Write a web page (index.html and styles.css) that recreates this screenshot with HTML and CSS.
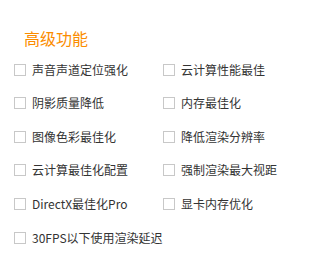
FILE: index.html
```html
<!DOCTYPE html>
<html lang="zh">
<head>
<meta charset="utf-8">
<link rel="stylesheet" href="styles.css">
</head>
<body>
<div class="panel">
  <h2 class="title">高级功能</h2>
  <div class="options">
    <label class="opt"><span class="box"></span><span class="txt">声音声道定位强化</span></label>
    <label class="opt"><span class="box"></span><span class="txt">云计算性能最佳</span></label>
    <label class="opt"><span class="box"></span><span class="txt">阴影质量降低</span></label>
    <label class="opt"><span class="box"></span><span class="txt">内存最佳化</span></label>
    <label class="opt"><span class="box"></span><span class="txt">图像色彩最佳化</span></label>
    <label class="opt"><span class="box"></span><span class="txt">降低渲染分辨率</span></label>
    <label class="opt"><span class="box"></span><span class="txt">云计算最佳化配置</span></label>
    <label class="opt"><span class="box"></span><span class="txt">强制渲染最大视距</span></label>
    <label class="opt"><span class="box"></span><span class="txt">DirectX最佳化Pro</span></label>
    <label class="opt"><span class="box"></span><span class="txt">显卡内存优化</span></label>
    <label class="opt last"><span class="box"></span><span class="txt">30FPS以下使用渲染延迟</span></label>
  </div>
</div>
</body>
</html>
```
FILE: styles.css
```css
html, body {
  margin: 0;
  padding: 0;
  background: #ffffff;
}
body {
  font-family: "Noto Sans CJK SC", "Noto Sans", sans-serif;
  color: #333333;
}
.panel {
  padding: 28px 0 0 0;
}
.title {
  margin: 0 0 4px 24px;
  font-size: 16px;
  line-height: 21px;
  font-weight: normal;
  color: #fb8c00;
}
.options {
  display: grid;
  grid-template-columns: 149px 149px;
  grid-auto-rows: 33.5px;
  padding-left: 14px;
}
.opt {
  display: flex;
  align-items: center;
  gap: 6px;
  font-size: 12px;
  white-space: nowrap;
}
.last {
  margin-top: 2px;
}
.box {
  width: 10px;
  height: 10px;
  border: 1px solid #c8c8c8;
  background: #fff;
  flex: none;
}
.txt {
  line-height: 16px;
}
```
